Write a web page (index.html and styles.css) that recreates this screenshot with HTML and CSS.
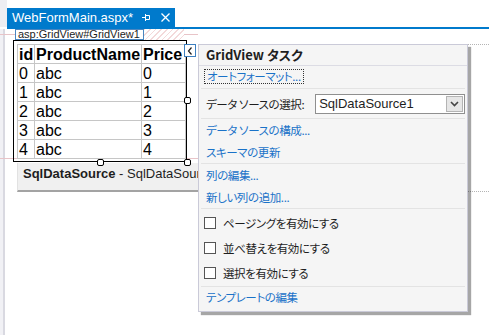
FILE: index.html
```html
<!DOCTYPE html>
<html lang="ja">
<head>
    <meta charset="UTF-8">
    <title>WebFormMain.aspx</title>
    <link rel="stylesheet" href="styles.css">
</head>
<body>

<div class="tabs">
    <div class="tab">
        <span class="tab-title">WebFormMain.aspx*</span>
        <svg class="tab-pin" width="8" height="7" viewBox="0 0 8 7">
            <path d="M0 3.5H3M3.5 0V7M3.5 1.5H7.5V5.5H3.5" fill="none" stroke="#fff" stroke-width="1"/>
        </svg>
        <svg class="tab-close" width="9" height="9" viewBox="0 0 9 9">
            <path d="M0.5 0.5L8.5 8.5M8.5 0.5L0.5 8.5" stroke="#fff" stroke-width="1.3"/>
        </svg>
    </div>
</div>
<div class="tab-line"></div>

<div class="surface">
    <div class="guide guide-top"></div>
    <div class="guide guide-bottom"></div>
    <div class="dotted-box"></div>

    <div class="gv-head">
        <span class="gv-label">asp:GridView#GridView1</span>
        <span class="gv-hatch"></span>
    </div>

    <div class="gv-select">
        <table class="grid">
            <tr><th class="c-id">id</th><th class="c-name">ProductName</th><th class="c-price">Price</th></tr>
            <tr><td>0</td><td>abc</td><td>0</td></tr>
            <tr><td>1</td><td>abc</td><td>1</td></tr>
            <tr><td>2</td><td>abc</td><td>2</td></tr>
            <tr><td>3</td><td>abc</td><td>3</td></tr>
            <tr><td>4</td><td>abc</td><td>4</td></tr>
        </table>
        <span class="handle h-right"></span>
        <span class="handle h-bottom"></span>
        <span class="handle h-corner"></span>
    </div>

    <div class="ds-bar"><b>SqlDataSource</b> - SqlDataSource1</div>

    <div class="smart-tag">
        <svg width="6" height="8" viewBox="0 0 6 8"><path d="M4.5 0.5L1.5 4L4.5 7.5" fill="none" stroke="#1e1e1e" stroke-width="1.2"/></svg>
    </div>

    <div class="tasks">
        <div class="task-head">GridView タスク</div>

        <div class="task-sec sec-format">
            <a class="link focus">オートフォーマット...</a>
        </div>

        <div class="task-sec sec-source">
            <span class="task-label">データ ソースの選択:</span>
            <div class="combo">
                <span class="combo-text">SqlDataSource1</span>
                <span class="combo-btn">
                    <svg width="9" height="6" viewBox="0 0 9 6"><path d="M1 1L4.5 4.5L8 1" fill="none" stroke="#444" stroke-width="1.6"/></svg>
                </span>
            </div>
        </div>

        <div class="task-sec">
            <a class="link row">データ ソースの構成...</a>
            <a class="link row">スキーマの更新</a>
        </div>

        <div class="task-sec">
            <a class="link row">列の編集...</a>
            <a class="link row">新しい列の追加...</a>
        </div>

        <div class="task-sec sec-checks">
            <label class="check"><span class="box"></span>ページングを有効にする</label>
            <label class="check"><span class="box"></span>並べ替えを有効にする</label>
            <label class="check"><span class="box"></span>選択を有効にする</label>
        </div>

        <div class="task-sec sec-last">
            <a class="link row">テンプレートの編集</a>
        </div>
    </div>
</div>

</body>
</html>
```

FILE: styles.css
```css
body {
    margin: 0;
    width: 489px;
    height: 335px;
    overflow: hidden;
    background: #fff;
    font-family: "Liberation Sans", Arial, sans-serif;
    display: flex;
    flex-direction: column;
}

.tabs {
    height: 27px;
    display: flex;
    align-items: flex-end;
    padding-left: 7px;
    background: linear-gradient(to right, #eeeef2 7px, #fff 7px);
}

.tab {
    width: 163px;
    height: 19px;
    padding-left: 5px;
    display: flex;
    align-items: center;
    background: #007acc;
    color: #fff;
    font-size: 13px;
}

.tab-title {
    width: 130px;
}

.tab-pin {
    margin-right: 11px;
}

.tab-line {
    height: 2px;
    margin-left: 7px;
    background: #007acc;
}

.surface {
    position: relative;
    flex: 1;
    background: linear-gradient(to right, #f1f1f5 0 3px, #d9d9e1 3px 5px, #fff 5px);
}

/* pink margin guides of the designer */
.guide {
    position: absolute;
    left: 0;
    width: 198px;
    height: 1px;
    background: #e8c4c8;
}

.guide-top {
    top: 5px;
}

.guide-bottom {
    top: 129px;
}

.dotted-box {
    position: absolute;
    left: 300px;
    right: 0;
    top: 15px;
    height: 146px;
    border-top: 1px dotted #b4b4b4;
    border-bottom: 1px dotted #b4b4b4;
}

.gv-head {
    position: relative;
    display: flex;
    margin-left: 15px;
    height: 11px;
}

.gv-label {
    box-sizing: border-box;
    width: 129px;
    height: 11px;
    border: 1px solid #4a86c0;
    background: #fff;
    color: #1e1e1e;
    font-size: 11px;
    line-height: 9px;
    padding-left: 2px;
    white-space: nowrap;
}

.gv-hatch {
    width: 40px;
    height: 11px;
    background: repeating-linear-gradient(135deg, #f3d9da 0 1px, #fff 1px 4px);
}

.gv-select {
    position: relative;
    box-sizing: border-box;
    width: 174px;
    height: 122px;
    margin-left: 13px;
    padding: 3px 0 0 3px;
    border: 1px solid #000;
}

.grid {
    border-collapse: collapse;
    font-size: 16px;
    color: #000;
}

.grid th,
.grid td {
    border: 1px solid #c6c6c6;
    line-height: 17px;
    padding: 1px 0 0 1px;
    text-align: left;
    white-space: nowrap;
}

.grid td {
    font-weight: normal;
}

.c-id { width: 15px; }
.c-name { width: 105px; }
.c-price { width: 42px; }

.handle {
    position: absolute;
    width: 5px;
    height: 5px;
    border: 1px solid #000;
    border-radius: 2px;
    background: #fff;
}

.h-right { right: -5px; top: 56px; }
.h-bottom { left: 83px; bottom: -5px; }
.h-corner { right: -5px; bottom: -5px; }

.ds-bar {
    box-sizing: border-box;
    width: 200px;
    height: 29px;
    margin: 1px 0 0 17px;
    padding: 2px 0 0 5px;
    background: #f0f0f0;
    border-left: 1px solid #e2e2e2;
    border-bottom: 2px solid #a3a3a3;
    font-size: 13px;
    line-height: 17px;
    color: #1e1e1e;
    white-space: nowrap;
}

.smart-tag {
    position: absolute;
    left: 184px;
    top: 15px;
    box-sizing: border-box;
    width: 12px;
    height: 13px;
    border: 1px solid #3c7fc0;
    background: #fff;
    display: flex;
    align-items: center;
    justify-content: center;
}

/* task popup */
.tasks {
    position: absolute;
    left: 198px;
    top: 15px;
    box-sizing: border-box;
    width: 270px;
    height: 268px;
    border: 1px solid #cacad8;
    background: #f5f5f5;
    box-shadow: 3px 3px 1px rgba(0, 0, 0, 0.35);
    font-family: "Noto Sans CJK JP", "Liberation Sans", sans-serif;
    font-feature-settings: "palt";
    font-size: 11.5px;
    letter-spacing: -0.4px;
    color: #1e1e1e;
}

.task-head {
    height: 20px;
    line-height: 20px;
    padding-left: 7px;
    font-size: 13px;
    letter-spacing: 0;
    font-weight: bold;
    border-bottom: 1px solid #dcdce4;
}

.task-sec {
    margin: 0 2px;
    border-top: 1px solid #e3e3e3;
    display: flex;
    flex-direction: column;
}

.sec-format {
    border-top: none;
    height: 22px;
    padding-top: 3px;
    box-sizing: border-box;
}

.link {
    color: #1a72c8;
}

.focus {
    align-self: flex-start;
    margin-left: 3px;
    padding: 0 2px;
    height: 13px;
    line-height: 13px;
    border: 1px dotted #333;
}

.row {
    height: 22px;
    line-height: 22px;
    padding-left: 5px;
}

.sec-source {
    flex-direction: row;
    align-items: center;
    height: 29px;
    padding-left: 5px;
}

.task-label {
    width: 110px;
}

.combo {
    box-sizing: border-box;
    width: 151px;
    height: 20px;
    display: flex;
    align-items: center;
    border: 1px solid #8f8f8f;
    background: #fff;
}

.combo-text {
    flex: 1;
    padding-left: 3px;
    font-family: "Liberation Sans", Arial, sans-serif;
    font-size: 13px;
    letter-spacing: 0;
}

.combo-btn {
    box-sizing: border-box;
    width: 17px;
    height: 16px;
    margin-right: 1px;
    display: flex;
    align-items: center;
    justify-content: center;
    background: #e6e6e6;
    border: 1px solid #b4b4b4;
}

.sec-checks {
    height: 78px;
    padding-top: 1px;
    box-sizing: border-box;
}

.check {
    height: 25.5px;
    display: flex;
    align-items: center;
    padding-left: 3px;
}

.box {
    box-sizing: border-box;
    width: 12px;
    height: 12px;
    margin-right: 7px;
    border: 1px solid #555;
    background: #fff;
}

.sec-last .row {
    height: 21px;
    line-height: 21px;
}
```
